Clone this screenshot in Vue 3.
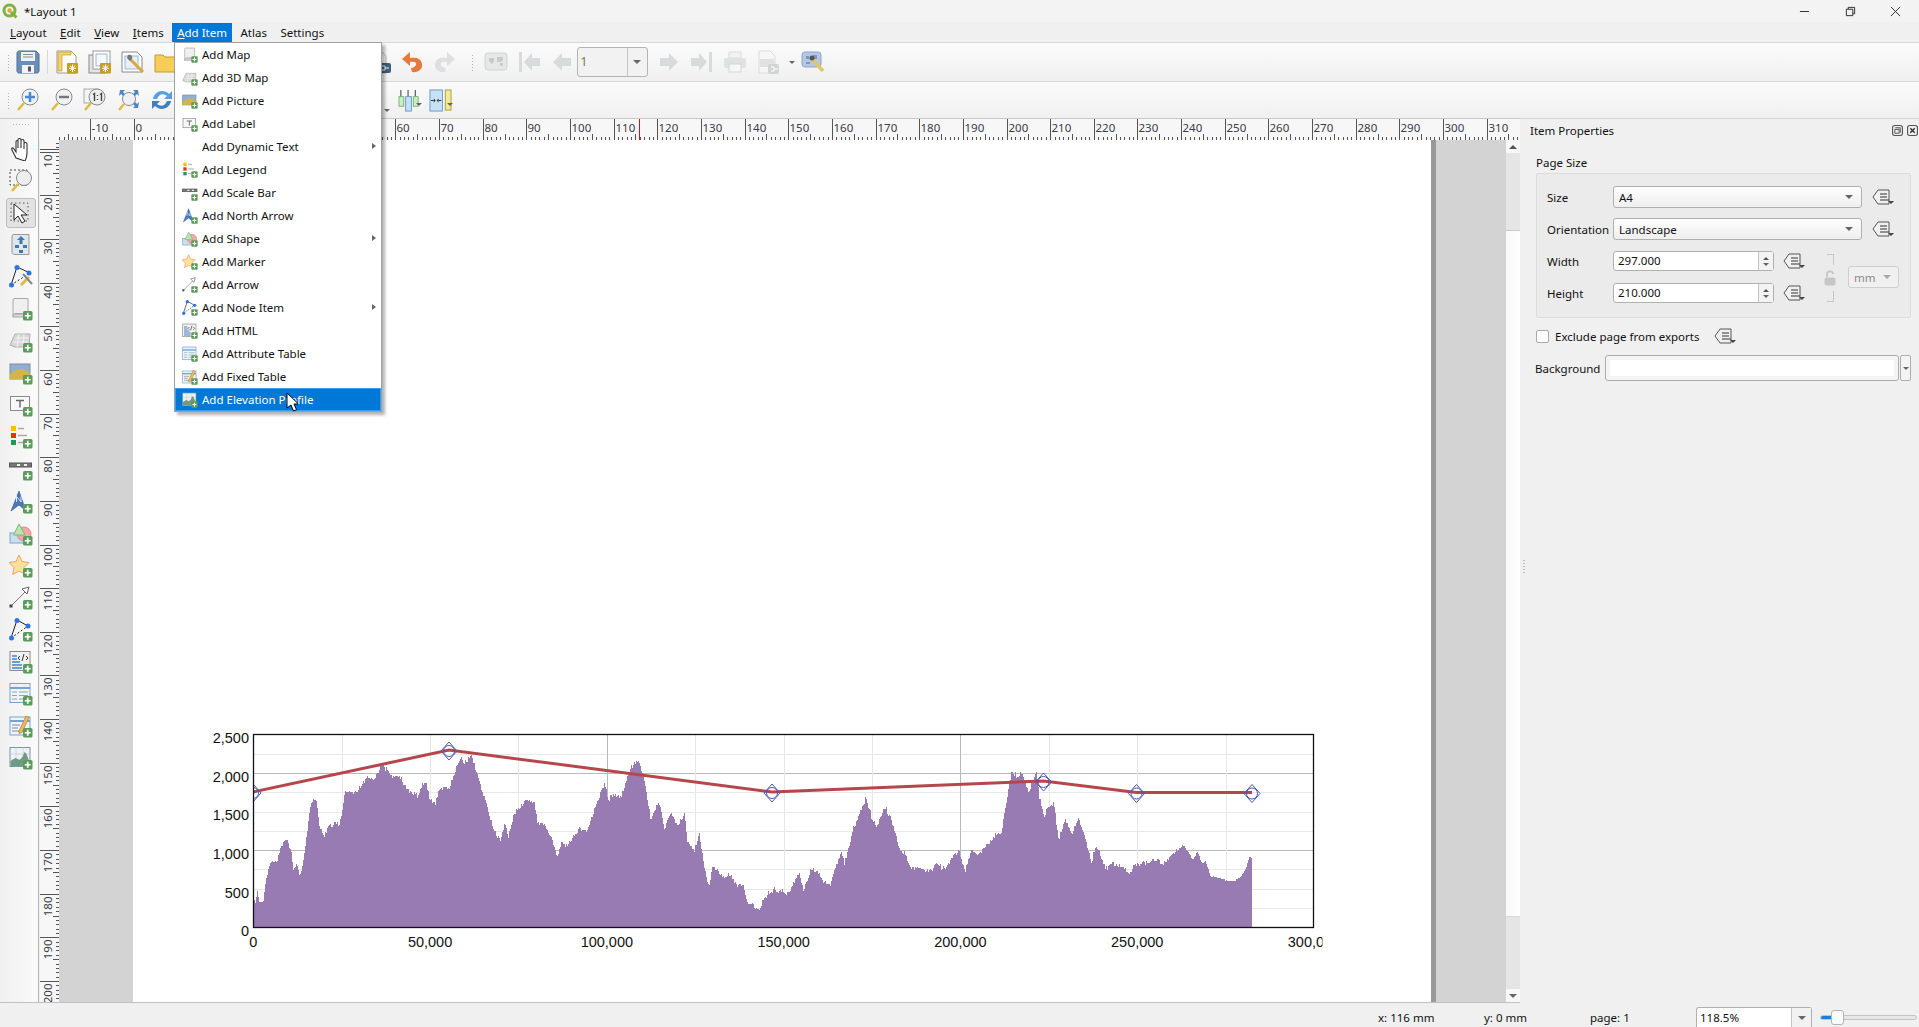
<template>
  <div class="app">
    <!-- shared icons -->
    <svg class="defs" aria-hidden="true">
      <defs>
        <g id="badge"><rect x="14" y="14" width="9.5" height="9.5" rx="1.5" fill="#5b9a5b" /><path d="M18.75 15.8v5.9M15.8 18.75h5.9" stroke="#fff" stroke-width="1.7" /></g>
        <symbol id="i-map" viewBox="0 0 24 24"><path d="M5 1.5h14v15H7c-2 0-3 1-3 3.5V4c0-1.4.4-2.5 1-2.5z" fill="#efefef" stroke="#a8a8a8" /><path d="M4 20c0-2 1-3 3-3h12v3z" fill="#d8d8d8" stroke="#a8a8a8" /><use href="#badge" /></symbol>
        <symbol id="i-map3d" viewBox="0 0 24 24"><path d="M1 16 6 5h15l-1 13H6z" fill="#d8d8d8" stroke="#b0b0b0" /><path d="M6 9h14M4 13h15M10 5 8 18M15 5l-1 13" stroke="#f4f4f4" /><use href="#badge" /></symbol>
        <symbol id="i-picture" viewBox="0 0 24 24"><rect x="1" y="3" width="20" height="15" fill="#8fb0d6" stroke="#8a8a8a" /><path d="M1 13c5-4 10-6 13-5l7 4v6H1z" fill="#d4b34a" /><use href="#badge" /></symbol>
        <symbol id="i-label" viewBox="0 0 24 24"><rect x="1.5" y="3.5" width="19" height="14" fill="#f8f8f8" stroke="#8a8a8a" /><path d="M7 7.5h8M11 7.5v7" stroke="#666" stroke-width="1.4" fill="none" /><use href="#badge" /></symbol>
        <symbol id="i-legend" viewBox="0 0 24 24"><rect x="2" y="1" width="5" height="5" fill="#f6c100" /><rect x="2" y="8" width="5" height="5" fill="#dd3a0a" /><rect x="2" y="15" width="5" height="5" fill="#1d9a4f" /><path d="M9 3.5h6M9 10.5h9M9 17.5h5" stroke="#aaa" stroke-width="1.5" /><use href="#badge" /></symbol>
        <symbol id="i-scale" viewBox="0 0 24 24"><rect x="0.5" y="6" width="22" height="4" fill="#777" stroke="#555" /><path d="M8 8h3M15 8h3" stroke="#eee" stroke-width="2" /><use href="#badge" /></symbol>
        <symbol id="i-north" viewBox="0 0 24 24"><path d="M2 21 10 1l7 20-7-6z" fill="#4a78b8" stroke="#35588c" stroke-width=".6" /><path d="M7.500 12V6.500L12 12V6.500" stroke="#dfe8f4" fill="none" /><use href="#badge" /></symbol>
        <symbol id="i-shape" viewBox="0 0 24 24"><rect x="1" y="11" width="16" height="10" fill="#c9dff2" stroke="#7fa3c8" /><circle cx="15" cy="12" r="7" fill="#f0a9a4" stroke="#d88" /><path d="M4.500 13 10 2l6 11z" fill="#bde4b3" stroke="#7db87a" /><use href="#badge" /></symbol>
        <symbol id="i-marker" viewBox="0 0 24 24"><path d="m10 1 3 6.500 7 1-5 5 1.300 7L10 17l-6.300 3.500L5 13.500 0 8.500l7-1z" fill="#fbe29c" stroke="#eba26a" /><use href="#badge" /></symbol>
        <symbol id="i-arrow" viewBox="0 0 24 24"><path d="M2 20 17 5" stroke="#777" /><path d="m20 1-7 2 5 5z" fill="#fff" stroke="#666" /><rect x="0.500" y="18.500" width="3" height="3" fill="#444" /><use href="#badge" /></symbol>
        <symbol id="i-node" viewBox="0 0 24 24"><path d="M2 20 8 2l11 6" stroke="#222" fill="none" /><path d="m2 20 17-12" stroke="#222" stroke-dasharray="2 2" /><circle cx="2.500" cy="20" r="2.500" fill="#2f74e0" /><circle cx="8" cy="2.500" r="2.500" fill="#2f74e0" /><circle cx="19" cy="8" r="2.500" fill="#2f74e0" /><use href="#badge" /></symbol>
        <symbol id="i-html" viewBox="0 0 24 24"><rect x="1" y="1.500" width="20" height="19" fill="#f1f1f1" stroke="#8a8a8a" /><path d="M3 6h5M3 9h5M3 12h8M3 15h10M3 18h10" stroke="#4a7fc0" stroke-width="1.500" /><path d="m11 6-2 2 2 2M17 6l2 2-2 2M15 4l-2 7" stroke="#333" fill="none" /><use href="#badge" /></symbol>
        <symbol id="i-attr" viewBox="0 0 24 24"><rect x="1" y="1.500" width="20" height="19" fill="#eef4fb" stroke="#7ba1cf" /><path d="M1 6h20" stroke="#7ba1cf" stroke-width="2" /><path d="M4 3.800h6M13 3.800h5" stroke="#dce8f6" /><path d="M3 10h5M10 10h9M3 13.500h5M10 13.500h9M3 17h5M10 17h5" stroke="#8aa" /><use href="#badge" /></symbol>
        <symbol id="i-fixed" viewBox="0 0 24 24"><rect x="1" y="3" width="20" height="18" fill="#eef4fb" stroke="#7ba1cf" /><path d="M1 7h20" stroke="#7ba1cf" stroke-width="2" /><path d="M3 11h8M3 14h6M3 17h8" stroke="#889" /><path d="m10 17 7-15 3 1.500-7 15-3 1z" fill="#f0b85a" stroke="#b07c2a" stroke-width=".7" /><use href="#badge" /></symbol>
        <symbol id="i-elev" viewBox="0 0 24 24"><rect x="1" y="1.500" width="20" height="19" fill="#eef2f4" stroke="#7c93a3" /><path d="M7 1.500v19M14 1.500v19M1 8h20M1 14h20" stroke="#c6d0d6" stroke-width=".8" /><path d="M1.500 20v-5l5-3 4 2 3-3 2-5 2 2 3 8v4z" fill="#6f9a83" /><use href="#badge" /></symbol>
        <symbol id="i-save" viewBox="0 0 24 24"><path d="M3 1h17l3 3v17c0 1-1 2-2 2H3c-1 0-2-1-2-2V3c0-1 1-2 2-2z" fill="#6a8eb8" stroke="#4f6f96" /><rect x="5" y="2" width="14" height="9" fill="#eef1f5" /><path d="M7 4.500h10M7 7h10" stroke="#8a8a8a" /><rect x="6" y="15" width="12" height="8" fill="#f2f2f2" /><rect x="12" y="16.500" width="3" height="5" fill="#556" /></symbol>
        <symbol id="i-newl" viewBox="0 0 24 24"><path d="M2 1h14l5 5v17H2z" fill="#fff" stroke="#999" /><path d="M3 2h13v3H7v16H3z" fill="#f3d36d" stroke="#c49a2a" stroke-width=".7" /><rect x="12" y="13" width="11" height="10.500" rx="1" fill="#c69d1c" /><path d="M17.500 14.500v7.500M14 18.200h7M15 15.500l5 5.500M20 15.500l-5 5.500" stroke="#fff" stroke-width="1" /></symbol>
        <symbol id="i-dup" viewBox="0 0 24 24"><rect x="1" y="5" width="16" height="18" fill="#e3e3e3" stroke="#888" /><rect x="5" y="1" width="17" height="18" fill="#fff" stroke="#999" /><rect x="8" y="4" width="11" height="12" fill="#f5f8fc" stroke="#9db7d6" /><rect x="12" y="13" width="11" height="10.500" rx="1" fill="#c69d1c" /><path d="M17.500 14.500v7.500M14 18.200h7M15 15.500l5 5.500M20 15.500l-5 5.500" stroke="#fff" /></symbol>
        <symbol id="i-manager" viewBox="0 0 24 24"><path d="M1 2h15l5 5v15H1z" fill="#fff" stroke="#888" /><rect x="4" y="6" width="13" height="13" fill="#e7eef7" stroke="#9db7d6" /><path d="m8 8 14 14" stroke="#d4aa3e" stroke-width="3" /><path d="M7 5c3-1 5 1 4 4L9 11 6 8z" fill="#777" /></symbol>
        <symbol id="i-open" viewBox="0 0 24 24"><path d="M1 5h8l2 2h12v15H1z" fill="#f5cd58" stroke="#c99c22" /></symbol>
        <symbol id="i-undo" viewBox="0 0 24 24"><path d="M10 2 2 9l8 7v-4c4-1 7 0 6 3-1 2-3 3-5 3l1 4c6 1 11-3 10-8-1-6-6-7-12-6z" fill="#e5793a" /></symbol>
        <symbol id="i-redo" viewBox="0 0 24 24"><path d="m14 2 8 7-8 7v-4c-4-1-7 0-6 3 1 2 3 3 5 3l-1 4C6 23 1 19 2 14c1-6 6-7 12-6z" fill="#dde0e0" /></symbol>
        <symbol id="i-atlas" viewBox="0 0 24 24"><rect x="1" y="3" width="22" height="17" rx="3" fill="#e6e8e8" stroke="#d0d3d3" /><path d="M5 8h5v3l-2 3-3-3zM13 7h6v3l-2 2h-4zM16 13h3v3h-3z" fill="#c6caca" /></symbol>
        <symbol id="i-first" viewBox="0 0 24 24"><path d="M2 2h3v20H2zM7 12l8-9v5h8v8h-8v5z" fill="#d8dbdc" /></symbol>
        <symbol id="i-prev" viewBox="0 0 24 24"><path d="m3 12 9-9v5h9v8h-9v5z" fill="#d8dbdc" /></symbol>
        <symbol id="i-next" viewBox="0 0 24 24"><path d="m21 12-9-9v5H3v8h9v5z" fill="#d8dbdc" /></symbol>
        <symbol id="i-last" viewBox="0 0 24 24"><path d="M22 2h-3v20h3zM17 12 9 3v5H1v8h8v5z" fill="#d8dbdc" /></symbol>
        <symbol id="i-print" viewBox="0 0 24 24"><path d="M6 2h12v6H6z" fill="#f2f2f2" stroke="#d8dbdc" /><rect x="1" y="8" width="22" height="10" rx="2" fill="#dfe2e2" /><rect x="6" y="14" width="12" height="8" fill="#f7f7f7" stroke="#d3d6d6" /></symbol>
        <symbol id="i-export" viewBox="0 0 24 24"><path d="M3 1h11l5 5v17H3z" fill="#f6f6f6" stroke="#dcdcdc" /><rect x="4" y="9" width="14" height="8" fill="#e0e2e2" /><rect x="12" y="14" width="11" height="10" rx="2" fill="#d2d4d4" /><path d="M15 17h3v4h-3M18 19h4" stroke="#fff" fill="none" /></symbol>
        <symbol id="i-export-on" viewBox="0 0 24 24"><path d="M3 1h11l5 5v17H3z" fill="#f6f6f6" stroke="#bbb" /><rect x="12" y="13" width="12" height="10" rx="2" fill="#3e5f78" /><path d="M15 16h3v4h-3M18 18h4" stroke="#fff" fill="none" /></symbol>
        <symbol id="i-atset" viewBox="0 0 24 24"><rect x="1" y="2" width="19" height="15" rx="3" fill="#b4c8e4" stroke="#8ea6c8" /><path d="M5 6h3v3H5zM12 5h4v4h-4zM5 12h4v2H5z" fill="#7d97bd" /><path d="m11 9 11 12" stroke="#e0c766" stroke-width="3.500" /><circle cx="11" cy="8" r="2.500" fill="#555" /></symbol>
        <symbol id="i-zin" viewBox="0 0 24 24"><circle cx="14" cy="9" r="8" fill="#eef2f7" stroke="#8a8a8a" /><path d="M14 4v10M9 9h10" stroke="#4c86cc" stroke-width="2.500" /><path d="m8 15-6 7" stroke="#e2b93f" stroke-width="2.500" /></symbol>
        <symbol id="i-zout" viewBox="0 0 24 24"><circle cx="14" cy="9" r="8" fill="#eef2f7" stroke="#8a8a8a" /><path d="M9 9h10" stroke="#777" stroke-width="2.500" /><path d="m8 15-6 7" stroke="#e2b93f" stroke-width="2.500" /></symbol>
        <symbol id="i-z11" viewBox="0 0 24 24"><rect x="1" y="1" width="14" height="14" fill="#f4f4f4" stroke="#aaa" /><circle cx="14" cy="9" r="8" fill="#eee" stroke="#8a8a8a" /><path d="M10 6.500 11.500 5.500V13M17 6.500 18.500 5.500V13M14.500 7v1M14.500 11v1" stroke="#444" stroke-width="1.400" fill="none" /><path d="m8 15-6 7" stroke="#e2b93f" stroke-width="2.500" /></symbol>
        <symbol id="i-zfull" viewBox="0 0 24 24"><path d="M3 2h5L6 4l3 3-2 2-3-3-2 2zM21 2h-5l2 2-3 3 2 2 3-3 2 2zM21 20h-5l2-2-3-3 2-2 3 3 2-2z" fill="#4a85c8" /><circle cx="12" cy="11" r="6.500" fill="#eef2f7" stroke="#8a8a8a" /><path d="m7 16-5 6" stroke="#e2b93f" stroke-width="2.500" /></symbol>
        <symbol id="i-refresh" viewBox="0 0 24 24"><path d="M3 11C4 4 13 0 19 6l3-3v8h-8l3-3c-4-3-8-2-10 3z" fill="#58a0dc" /><path d="M21 13c-1 7-10 11-16 5l-3 3v-8h8l-3 3c4 3 8 2 10-3z" fill="#3d80c2" /></symbol>
        <symbol id="i-hand" viewBox="0 0 24 24"><path d="M7 21 3 13c-1-2 1-3 2-1l2 3V5c0-2 2-2 2 0v6-8c0-2 3-2 3 0v8-7c0-2 3-2 3 0v8-5c0-2 3-2 3 0v9c0 4-1 6-2 8z" fill="#fff" stroke="#333" stroke-width="1.100" /></symbol>
        <symbol id="i-zbox" viewBox="0 0 24 24"><rect x="1" y="1" width="17" height="15" fill="none" stroke="#444" stroke-dasharray="2 2" /><circle cx="15" cy="9" r="7.500" fill="#eee" stroke="#888" /><path d="m9 15-6 7" stroke="#e2b93f" stroke-width="2.500" /></symbol>
        <symbol id="i-select" viewBox="0 0 24 24"><rect x="2" y="2" width="17" height="18" fill="none" stroke="#555" stroke-dasharray="1.500 2.500" /><path d="M5 3v16l4-4 4 7 3-2-4-6h6z" fill="#fff" stroke="#222" /></symbol>
        <symbol id="i-move" viewBox="0 0 24 24"><path d="M4 1.500h16v20H6c-2 0-3-1-3-2V3z" fill="#dfe6ee" stroke="#999" /><path d="m12 3 4 4h-8zM10.500 7h3v4h-3zM6 12h4v3H6zM14 12h4v3h-4zM10 17h4v3h-4z" fill="#3d77b5" /></symbol>
        <symbol id="i-edit" viewBox="0 0 24 24"><path d="M2 20 8 2l13 6" stroke="#222" fill="none" /><path d="m2 20 19-12" stroke="#222" stroke-dasharray="2 2" /><circle cx="2.500" cy="20" r="2.500" fill="#2f74e0" /><circle cx="8" cy="2.500" r="2.500" fill="#2f74e0" /><circle cx="20" cy="8" r="2.500" fill="#2f74e0" /><path d="m12 20 8-8" stroke="#e2b93f" stroke-width="3" /><path d="m14 9 9 10" stroke="#888" stroke-width="2" /></symbol>
        <symbol id="i-dist" viewBox="0 0 24 24"><path d="M3 1v7M10.500 1v7M18 1v7" stroke="#333" /><rect x="1" y="8" width="5" height="10" fill="#c6f0c0" stroke="#7faf7a" /><rect x="8" y="8" width="6" height="15" fill="#c5e2f7" stroke="#6a9ac2" /><rect x="16" y="8" width="5" height="10" fill="#c6f0c0" stroke="#7faf7a" /></symbol>
        <symbol id="i-resize" viewBox="0 0 24 24"><rect x="1" y="1" width="13" height="22" fill="#c5e2f7" stroke="#6a9ac2" /><path d="M2 12h3M13 12h-3" stroke="#333" /><path d="m5 10 2 2-2 2zM10 10l-2 2 2 2z" fill="#333" /><rect x="17" y="1" width="6" height="21" fill="#f5e98f" stroke="#a89c50" /></symbol>
        <symbol id="i-dd" viewBox="0 0 23 16"><path d="M6 1h11v14H6L1 8z" fill="#f0f0f0" stroke="#555" /><path d="M8 5h7M8 8h7M8 11h9" stroke="#333" /><path d="M16 12h6l-3 3z" fill="#444" /></symbol>
      </defs>
    </svg>

    <header class="titlebar">
      <svg class="logo" viewBox="0 0 16 16">
        <circle cx="7.500" cy="7.500" r="5.500" fill="none" stroke="#7fb241" stroke-width="3" />
        <circle cx="7.500" cy="7.500" r="2.200" fill="#e9a53a" />
        <path d="m9 9 5.500 5.500" stroke="#7fb241" stroke-width="3" />
      </svg>
      <span class="title">*Layout 1</span>
      <div class="win-btns">
        <svg viewBox="0 0 12 12"><path d="M1 6h10" stroke="#222" /></svg>
        <svg viewBox="0 0 12 12"><path d="M1.500 3.500h7v7h-7zM3.500 3.500v-2h7v7h-2" fill="none" stroke="#222" /></svg>
        <svg viewBox="0 0 12 12"><path d="m1 1 10 10M11 1 1 11" stroke="#222" /></svg>
      </div>
    </header>

    <nav class="menubar">
      <span v-for="m in menus" :key="m.label" class="menu-title" :class="{ open: m.open }"><u v-if="m.key">{{ m.label[0] }}</u>{{ m.key ? m.label.slice(1) : m.label }}</span>
    </nav>

    <div class="toolbar row1">
      <span class="grip"></span>
      <span class="tb"><svg><use href="#i-save" /></svg></span>
      <span class="tb-sep"></span>
      <span v-for="id in fileIcons" :key="id" class="tb"><svg><use :href="'#' + id" /></svg></span>
      <span class="under-menu-1"></span>
      <span class="tb"><svg><use href="#i-export-on" /></svg></span>
      <span class="tb"><svg><use href="#i-undo" /></svg></span>
      <span class="tb"><svg><use href="#i-redo" /></svg></span>
      <span class="grip grip-mid"></span>
      <span class="tb"><svg><use href="#i-atlas" /></svg></span>
      <span class="tb"><svg><use href="#i-first" /></svg></span>
      <span class="tb"><svg><use href="#i-prev" /></svg></span>
      <span class="atlas-combo"><span class="value">1</span><span class="drop"><i class="tri"></i></span></span>
      <span class="tb"><svg><use href="#i-next" /></svg></span>
      <span class="tb"><svg><use href="#i-last" /></svg></span>
      <span class="tb"><svg><use href="#i-print" /></svg></span>
      <span class="tb tb-wide"><svg><use href="#i-export" /></svg><i class="tri small"></i></span>
      <span class="tb"><svg><use href="#i-atset" /></svg></span>
    </div>

    <div class="toolbar row2">
      <span class="grip"></span>
      <span v-for="id in zoomIcons" :key="id" class="tb"><svg><use :href="'#' + id" /></svg></span>
      <span class="under-menu-2"></span>
      <i class="tri small"></i>
      <span class="tb-align"><svg><use href="#i-dist" /></svg><i class="tri small"></i></span>
      <span class="tb-align resize"><svg><use href="#i-resize" /></svg><i class="tri small"></i></span>
    </div>

    <div class="workspace">
      <aside class="toolbox">
        <span class="grip-h"></span>
        <span v-for="t in toolIcons" :key="t.id" class="tool" :class="{ active: t.active }"><svg><use :href="'#' + t.id" /></svg></span>
      </aside>

      <main class="view">
        <div class="ruler-top">
          <div class="ruler-corner"></div>
          <svg class="h-ruler" width="1461" height="21" viewBox="59 0 1461 21" shape-rendering="crispEdges">
            <path :d="hTicks" stroke="#555" fill="none" />
            <path d="M639.500 0v21" stroke="#e01010" />
            <text v-for="l in hLabels" :key="l.text" :x="l.x + 1" y="13" class="ruler-text">{{ l.text }}</text>
          </svg>
        </div>
        <div class="view-body">
          <svg class="v-ruler" width="19" height="863" viewBox="0 140 19 863" shape-rendering="crispEdges">
            <path :d="vTicks" stroke="#555" fill="none" />
            <path d="M0 149.500h19" stroke="#e01010" />
            <text v-for="l in vLabels" :key="l.text" class="ruler-text" text-anchor="end" :transform="`translate(12 ${l.y + 2}) rotate(-90)`">{{ l.text }}</text>
          </svg>
          <div class="canvas">
            <!-- layout page; item sits at its place on the sheet -->
            <svg class="sheet" width="1447" height="863" viewBox="59 140 1447 863">
              <rect x="133" y="140" width="1298" height="863" fill="#fff" />
              <rect x="1431" y="140" width="5" height="863" fill="#999" />
              <defs>
                <clipPath id="plot-clip"><rect x="253" y="734" width="1061" height="194" /></clipPath>
                <clipPath id="item-clip"><rect x="200" y="720" width="1122.500" height="240" /></clipPath>
              </defs>
              <g shape-rendering="crispEdges">
                <path v-for="g in grid" :key="g.d" :d="g.d" :stroke="g.major ? '#b9b9b9' : '#e8e8e8'" fill="none" />
                <path :d="profilePath" fill="#997bb3" />
              </g>
              <g clip-path="url(#plot-clip)">
                <polyline :points="linePoints" fill="none" stroke="#b5474c" stroke-width="3" />
                <g v-for="n in nodes" :key="n[0]" fill="none" stroke="#4b58b4" stroke-width="1">
                  <path :d="`M${n[0]} ${n[1] - 8}l8 9-8 9-8-9z`" />
                  <circle :cx="n[0]" :cy="n[1] + 1" r="5.500" />
                </g>
              </g>
              <rect x="253.500" y="734.500" width="1060" height="193" fill="none" stroke="#111" stroke-width="1.300" />
              <g clip-path="url(#item-clip)" class="chart-text">
                <text v-for="y in yAxis" :key="y.text" x="249" :y="y.y" text-anchor="end">{{ y.text }}</text>
                <text v-for="x in xAxis" :key="x.text" :x="x.x" y="946.500" text-anchor="middle">{{ x.text }}</text>
              </g>
            </svg>
          </div>
          <div class="vscroll">
            <span class="sb-btn"><i class="tri up"></i></span>
            <span class="sb-groove top"></span>
            <span class="sb-handle"></span>
            <span class="sb-groove bottom"></span>
            <span class="sb-btn"><i class="tri"></i></span>
          </div>
        </div>
      </main>

      <aside class="panel">
        <div class="panel-head">
          <span>Item Properties</span>
          <span class="dock-btns">
            <svg viewBox="0 0 10 10"><rect x=".5" y=".5" width="9" height="9" rx="2" fill="#eee" stroke="#555" /><path d="M3 2.500h4.500V7M2.500 4h4v3.500h-4z" fill="none" stroke="#444" stroke-width=".8" /></svg>
            <svg viewBox="0 0 10 10"><rect x=".5" y=".5" width="9" height="9" rx="2" fill="#eee" stroke="#555" /><path d="m3 3 4 4M7 3 3 7" stroke="#333" stroke-width="1.300" /></svg>
          </span>
        </div>
        <div class="panel-body">
          <div class="group-title">Page Size</div>
          <section class="group">
            <div class="form-row">
              <label>Size</label>
              <span class="combo"><span>A4</span><i class="tri"></i></span>
              <svg class="dd"><use href="#i-dd" /></svg>
            </div>
            <div class="form-row">
              <label>Orientation</label>
              <span class="combo"><span>Landscape</span><i class="tri"></i></span>
              <svg class="dd"><use href="#i-dd" /></svg>
            </div>
            <div class="size-block">
              <div class="size-fields">
                <div class="form-row" v-for="s in sizes" :key="s.label">
                  <label>{{ s.label }}</label>
                  <span class="spin"><span class="spin-val">{{ s.value }}</span><span class="spin-btns"><i class="tri up small"></i><i class="tri small"></i></span></span>
                  <svg class="dd spin-dd"><use href="#i-dd" /></svg>
                </div>
              </div>
              <div class="lock">
                <span class="bracket b-top"></span>
                <svg class="padlock" viewBox="0 0 12 16"><path d="M3 7V4c0-3.500 6-3.500 6 0" fill="none" stroke="#c6c6c6" stroke-width="1.800" /><rect x="0.500" y="7.500" width="11" height="8" rx="2" fill="#c6c6c6" /></svg>
                <span class="bracket b-bottom"></span>
              </div>
              <span class="unit"><span>mm</span><i class="tri"></i></span>
            </div>
          </section>
          <div class="exclude">
            <span class="check"></span>
            <span>Exclude page from exports</span>
            <svg class="dd"><use href="#i-dd" /></svg>
          </div>
          <div class="background">
            <label>Background</label>
            <span class="color-btn"><span></span></span>
            <span class="color-drop"><i class="tri small"></i></span>
          </div>
        </div>
        <span class="splitter"></span>
      </aside>
    </div>

    <footer class="statusbar">
      <span class="st st-x">x: 116 mm</span>
      <span class="st st-y">y: 0 mm</span>
      <span class="st st-page">page: 1</span>
      <span class="zoom-combo"><span>118.5%</span><span class="drop"><i class="tri"></i></span></span>
      <span class="slider"><span class="fill"></span><span class="knob"></span></span>
    </footer>

    <!-- open Add Item menu -->
    <div class="popup">
      <div v-for="item in addItems" :key="item.label" class="popup-item" :class="{ hot: item.hot }">
        <svg v-if="item.icon" class="popup-icon"><use :href="'#' + item.icon" /></svg>
        <span v-else class="popup-icon"></span>
        <span>{{ item.label }}</span>
        <i v-if="item.sub" class="sub-arrow"></i>
      </div>
    </div>
    <svg class="cursor" viewBox="0 0 12 20"><path d="M1 1v15l4-3 2.500 6 3-1.300L8 12h4.500z" fill="#fff" stroke="#000" /></svg>
  </div>
</template>

<script setup>
const menus = [
  { label: 'Layout', key: true },
  { label: 'Edit', key: true },
  { label: 'View', key: true },
  { label: 'Items', key: true },
  { label: 'Add Item', key: true, open: true },
  { label: 'Atlas' },
  { label: 'Settings' },
]

const fileIcons = ['i-newl', 'i-dup', 'i-manager', 'i-open']
const zoomIcons = ['i-zin', 'i-zout', 'i-z11', 'i-zfull', 'i-refresh']

const toolIcons = [
  { id: 'i-hand' }, { id: 'i-zbox' }, { id: 'i-select', active: true }, { id: 'i-move' }, { id: 'i-edit' },
  { id: 'i-map' }, { id: 'i-map3d' }, { id: 'i-picture' }, { id: 'i-label' }, { id: 'i-legend' },
  { id: 'i-scale' }, { id: 'i-north' }, { id: 'i-shape' }, { id: 'i-marker' }, { id: 'i-arrow' },
  { id: 'i-node' }, { id: 'i-html' }, { id: 'i-attr' }, { id: 'i-fixed' }, { id: 'i-elev' },
]

const addItems = [
  { label: 'Add Map', icon: 'i-map' },
  { label: 'Add 3D Map', icon: 'i-map3d' },
  { label: 'Add Picture', icon: 'i-picture' },
  { label: 'Add Label', icon: 'i-label' },
  { label: 'Add Dynamic Text', sub: true },
  { label: 'Add Legend', icon: 'i-legend' },
  { label: 'Add Scale Bar', icon: 'i-scale' },
  { label: 'Add North Arrow', icon: 'i-north' },
  { label: 'Add Shape', icon: 'i-shape', sub: true },
  { label: 'Add Marker', icon: 'i-marker' },
  { label: 'Add Arrow', icon: 'i-arrow' },
  { label: 'Add Node Item', icon: 'i-node', sub: true },
  { label: 'Add HTML', icon: 'i-html' },
  { label: 'Add Attribute Table', icon: 'i-attr' },
  { label: 'Add Fixed Table', icon: 'i-fixed' },
  { label: 'Add Elevation Profile', icon: 'i-elev', hot: true },
]

const sizes = [
  { label: 'Width', value: '297.000' },
  { label: 'Height', value: '210.000' },
]

// rulers: 4.365 px per mm
const MM = 4.365
const X0 = 133.5
const Y0 = 108

function tickLen(mm) {
  if (mm % 10 === 0) return 21
  return mm % 5 === 0 ? 6 : 3
}

let h = ''
const hLabels = []
for (let mm = -17; mm <= 317; mm++) {
  const x = Math.round(X0 + mm * MM) + 0.5
  const len = tickLen(mm)
  h += `M${x} ${21 - len}v${len}`
  // labels from 10 to 50 are behind the open menu
  if (mm % 10 === 0 && (x < 170 || x > 385)) hLabels.push({ text: String(mm), x })
}
const hTicks = h

let v = ''
const vLabels = []
for (let mm = 8; mm <= 205; mm++) {
  const y = Math.round(Y0 + mm * MM) + 0.5
  const len = mm % 10 === 0 ? 19 : tickLen(mm)
  v += `M${19 - len} ${y}h${len}`
  if (mm % 10 === 0) vLabels.push({ text: String(mm), y })
}
const vTicks = v

// chart: plot is 253.3..1314 x 734.5..927.3
const PL = 253.3
const PB = 927.3
const PW = 1060.7
const PH = 192.8

const grid = []
for (let e = 250; e < 2500; e += 250) {
  const y = Math.round(PB - (e / 2500) * PH) + 0.5
  grid.push({ d: `M${PL} ${y}H${PL + PW}`, major: e % 1000 === 0 })
}
for (let d = 25000; d < 300000; d += 25000) {
  const x = Math.round(PL + (d / 300000) * PW) + 0.5
  grid.push({ d: `M${x} 734V927`, major: d % 100000 === 0 })
}

const yAxis = [2500, 2000, 1500, 1000, 500, 0].map((e) => ({
  text: e.toLocaleString('en-US'),
  y: PB - (e / 2500) * PH + 8.8,
}))
const xAxis = [0, 50000, 100000, 150000, 200000, 250000, 300000].map((d) => ({
  text: d.toLocaleString('en-US'),
  x: PL + (d / 300000) * PW,
}))

// profile outline traced off the plot, [x px from plot left, height px]
const left = [
  [160, 540], [165, 550], [170, 520], [183, 555], [195, 460], [205, 425], [220, 425], [228, 385], [242, 352], [255, 390],
  [262, 450], [270, 430], [278, 468], [285, 430], [295, 350], [305, 250], [320, 240], [325, 310], [340, 352], [348, 315],
  [362, 320], [368, 305], [378, 315], [392, 215], [425, 210], [450, 168], [465, 182], [488, 128], [510, 170], [525, 165],
  [550, 210], [575, 225], [597, 185], [605, 240], [620, 250], [630, 205], [655, 205], [665, 170], [685, 105], [695, 130],
  [712, 105], [730, 180], [745, 235], [760, 300], [775, 345], [785, 365], [795, 310], [805, 350], [820, 280], [850, 240],
  [870, 245], [878, 305], [900, 320], [915, 360], [928, 410], [940, 362], [950, 380], [985, 325], [1005, 330], [1025, 260],
  [1048, 188], [1055, 235], [1070, 225], [1090, 230], [1115, 140], [1132, 122], [1145, 160], [1160, 260], [1165, 300], [1185, 240],
  [1200, 330], [1215, 280], [1235, 320], [1250, 280], [1258, 370], [1275, 390], [1288, 345], [1300, 440], [1312, 505], [1322, 435],
  [1345, 465], [1365, 465], [1385, 500], [1398, 495], [1408, 545], [1440, 568], [1450, 535], [1475, 512], [1515, 515], [1540, 458],
  [1550, 505],
].map(([zx, zy]) => [(zx - 160) / 2.529, (622 - zy) / 3])
const right = [
  [0, 492], [10, 510], [30, 450], [48, 450], [65, 485], [85, 497], [100, 440], [115, 397], [125, 425], [145, 345],
  [170, 270], [185, 238], [200, 295], [215, 318], [238, 260], [255, 300], [270, 350], [280, 395], [295, 398], [305, 440],
  [340, 450], [370, 452], [380, 432], [410, 445], [430, 405], [445, 395], [462, 450], [480, 390], [500, 408], [520, 380],
  [545, 350], [565, 335], [578, 240], [592, 155], [605, 170], [620, 160], [640, 215], [662, 155], [670, 230], [685, 300],
  [690, 265], [710, 250], [725, 355], [742, 295], [760, 340], [780, 298], [795, 340], [815, 425], [830, 378], [855, 445],
  [875, 430], [900, 440], [925, 460], [932, 435], [960, 430], [1000, 418], [1015, 437], [1040, 405], [1072, 372], [1100, 420],
  [1112, 395], [1125, 430], [1135, 425], [1150, 468], [1190, 480], [1210, 485], [1235, 470], [1250, 440], [1258, 408], [1266, 415],
].map(([zx, zy]) => [546.7 + zx / 2.8, (622 - zy) / 3])
const outline = left.concat(right)

let seed = 7
function noise() {
  seed = (seed * 1103515245 + 12345) % 2147483648
  return seed / 2147483648 - 0.5
}

function buildProfile() {
  let d = `M${Math.round(PL)} ${PB}`
  let seg = 0
  const end = outline[outline.length - 1][0]
  for (let x = 0; x < end; x++) {
    while (seg < outline.length - 2 && outline[seg + 1][0] <= x) seg++
    const [x1, h1] = outline[seg]
    const [x2, h2] = outline[seg + 1]
    const base = h1 + ((h2 - h1) * (x - x1)) / (x2 - x1)
    // last stretch of the track is smooth, the rest is jagged
    const jag = x > 930 ? 1.5 : noise() > 0.38 ? 9 : 4
    const top = Math.max(0, base + noise() * jag)
    d += `V${(PB - top).toFixed(1)}h1`
  }
  return d + `V${PB}z`
}
const profilePath = buildProfile()

const nodes = [
  [253, 792], [449, 750], [772, 792], [1043.5, 781], [1136.5, 792.5], [1252, 792.5],
]
const linePoints = nodes.map((n) => n.join(',')).join(' ')
</script>

<style scoped>
.app {
  position: relative;
  width: 1919px;
  height: 1027px;
  display: flex;
  flex-direction: column;
  overflow: hidden;
  background: #f0f0f0;
  font-family: "Noto Sans", "Open Sans", sans-serif;
  font-size: 11.5px;
  color: #111;
}
.defs {
  position: absolute;
  width: 0;
  height: 0;
}

.titlebar {
  height: 22px;
  flex: none;
  display: flex;
  align-items: center;
  background: #f3f3f3;
  padding-left: 2px;
}
.logo {
  width: 16px;
  height: 16px;
}
.title {
  margin-left: 6px;
  font-size: 11.5px;
}
.win-btns {
  margin-left: auto;
  display: flex;
  gap: 34.500px;
  padding-right: 18px;
}
.win-btns svg {
  width: 11px;
  height: 11px;
}

.menubar {
  height: 20px;
  flex: none;
  display: flex;
  padding-left: 5px;
  background: #f0f0f0;
}
.menu-title {
  padding: 0 5px;
  height: 20px;
  margin-top: 1px;
  line-height: 20px;
  white-space: nowrap;
  margin-right: 3.500px;
}
.menu-title.open {
  background: #0078d7;
  color: #fff;
}

.toolbar {
  height: 38px;
  flex: none;
  display: flex;
  align-items: center;
  box-sizing: border-box;
  border-top: 1px solid #d8d8d8;
  background: linear-gradient(#fbfbfb, #f0f0f0);
  padding-left: 7px;
}
.row1 {
  height: 39px;
}
.row2 {
  border-bottom: 1px solid #c8c8c8;
}
.grip {
  width: 3px;
  height: 17px;
  flex: none;
  margin-right: 1.500px;
  background-image: radial-gradient(circle, #b4b4b4 0.7px, transparent 0.8px);
  background-size: 3px 3px;
}
.grip-mid {
  margin: 0 6px 0 9px;
}
.tb {
  width: 33px;
  height: 26px;
  flex: none;
  display: flex;
  align-items: center;
  justify-content: center;
}
.tb svg {
  width: 24px;
  height: 24px;
}
.row2 .tb {
  width: 33.500px;
}
.tb-wide {
  width: 45px;
  justify-content: flex-start;
  padding-left: 4px;
  box-sizing: border-box;
  gap: 9px;
}
.tb-sep {
  width: 1px;
  height: 24px;
  background: #d8d8d8;
  margin: 0 3px 0 2px;
  flex: none;
}
.under-menu-1 {
  width: 180px;
  flex: none;
}
.under-menu-2 {
  width: 205px;
  flex: none;
}
.tri {
  display: inline-block;
  width: 0;
  height: 0;
  border-left: 4px solid transparent;
  border-right: 4px solid transparent;
  border-top: 4px solid #666;
}
.tri.up {
  border-top: 0;
  border-bottom: 4px solid #555;
}
.tri.small {
  border-left-width: 3px;
  border-right-width: 3px;
  border-top-width: 3px;
}
.tri.small.up {
  border-bottom-width: 3px;
  border-top-width: 0;
}
.atlas-combo {
  width: 71px;
  height: 30px;
  flex: none;
  display: flex;
  box-sizing: border-box;
  margin: 0 5px 0 -2px;
  border: 1px solid #b4b4b4;
  border-radius: 3px;
  background: #f2f2f2;
}
.atlas-combo .value {
  flex: 1;
  padding-left: 3px;
  line-height: 28px;
  color: #8a7348;
  font-size: 12px;
}
.atlas-combo .drop {
  width: 19px;
  border-left: 1px solid #c4c4c4;
  display: flex;
  align-items: center;
  justify-content: center;
}
.row2 .tri.small {
  align-self: flex-end;
  margin-bottom: 6px;
}
.tb-align {
  display: flex;
  margin-left: 8px;
  flex: none;
  position: relative;
}
.tb-align svg {
  width: 23px;
  height: 23px;
}
.tb-align .tri {
  margin-left: -5px;
}
.tb-align.resize {
  margin-left: 7px;
}

.workspace {
  flex: 1;
  min-height: 0;
  display: flex;
}
.toolbox {
  width: 39px;
  flex: none;
  box-sizing: border-box;
  border-right: 1px solid #b4b4b4;
  border-bottom: 1px solid #c0c0c0;
  display: flex;
  flex-direction: column;
  align-items: center;
  padding: 4px 0 0 3px;
  background: linear-gradient(90deg, #f0f0f0, #fafafa);
}
.grip-h {
  width: 17px;
  height: 4px;
  margin: 0 0 7px;
  background-image: radial-gradient(circle, #b4b4b4 0.7px, transparent 0.8px);
  background-size: 3px 3px;
}
.tool {
  width: 30px;
  height: 30px;
  flex: none;
  margin-bottom: 2.050px;
  display: flex;
  align-items: center;
  justify-content: center;
  box-sizing: border-box;
  border-radius: 3px;
}
.tool svg {
  width: 24px;
  height: 24px;
}
.tool.active {
  background: #e2e2e2;
  border: 1px solid #bdbdbd;
}

.view {
  width: 1481px;
  flex: none;
  display: flex;
  flex-direction: column;
  box-sizing: border-box;
  border-bottom: 1px solid #c0c0c0;
}
.ruler-top {
  display: flex;
  height: 21px;
  flex: none;
  background: #f7f7f7;
}
.ruler-corner {
  width: 20px;
  flex: none;
}
.ruler-text {
  font-family: "Noto Sans", sans-serif;
  font-size: 11.5px;
  fill: #3a3a4a;
  shape-rendering: auto;
}
.view-body {
  flex: 1;
  min-height: 0;
  display: flex;
  overflow: hidden;
}
.v-ruler {
  flex: none;
  background: #f7f7f7;
  margin-left: 1px;
}
.canvas {
  width: 1447px;
  flex: none;
  background: #d3d3d3;
  overflow: hidden;
}
.sheet {
  display: block;
}
.chart-text text {
  font-family: "Liberation Sans", Arial, sans-serif;
  font-size: 14.5px;
  fill: #111;
}
.vscroll {
  width: 14px;
  flex: none;
  display: flex;
  flex-direction: column;
  background: #f4f4f4;
}
.sb-btn {
  height: 13px;
  flex: none;
  display: flex;
  align-items: center;
  justify-content: center;
  background: #f8f8f8;
}
.sb-groove {
  background: #e5e5e5;
  flex: none;
}
.sb-groove.top {
  height: 77px;
  border-bottom: 1px solid #c9c9c9;
}
.sb-groove.bottom {
  height: 72px;
  border-top: 1px solid #d8d8d8;
}
.sb-handle {
  flex: 1;
  background: linear-gradient(90deg, #f8f8f8, #fff);
}

.panel {
  position: relative;
  flex: 1;
  min-width: 0;
  border-top: 1px solid #d8d8d8;
  margin-top: -1px;
  font-size: 11.500px;
}
.panel-head {
  height: 24px;
  box-sizing: border-box;
  display: flex;
  align-items: center;
  justify-content: space-between;
  padding: 0 1px 2px 10px;
}
.dock-btns {
  display: flex;
  gap: 4px;
}
.dock-btns svg {
  width: 11px;
  height: 11px;
}
.panel-body {
  padding: 12px 8px 0 16px;
}
.group-title {
  line-height: 16px;
  height: 18px;
}
.group {
  box-sizing: border-box;
  height: 145px;
  padding: 12px 0 0 10px;
  background: #ebebeb;
  border: 1px solid #dcdcdc;
  border-radius: 2px;
}
.form-row {
  display: flex;
  align-items: center;
  height: 22px;
  margin-bottom: 10px;
}
.form-row label {
  width: 66px;
  flex: none;
}
.combo {
  width: 249px;
  height: 22px;
  flex: none;
  box-sizing: border-box;
  display: flex;
  align-items: center;
  justify-content: space-between;
  padding: 0 8px 0 5px;
  border: 1px solid #b0b0b0;
  border-radius: 3px;
  background: linear-gradient(#fdfdfd, #efefef);
}
.dd {
  width: 23px;
  height: 16px;
  flex: none;
  margin-left: 10px;
}
.spin-dd {
  margin-left: 9px;
}
.size-block {
  display: flex;
  align-items: flex-start;
  margin-top: 11px;
}
.size-block .form-row {
  height: 20px;
  margin-bottom: 12px;
}
.spin {
  width: 161px;
  height: 20px;
  flex: none;
  box-sizing: border-box;
  display: flex;
  border: 1px solid #b0b0b0;
  border-radius: 3px;
  background: #fff;
}
.spin-val {
  flex: 1;
  padding-left: 4px;
  line-height: 18px;
}
.spin-btns {
  width: 14px;
  border-left: 1px solid #c4c4c4;
  display: flex;
  flex-direction: column;
  align-items: center;
  justify-content: center;
  gap: 3px;
  background: #f3f3f3;
}
.lock {
  width: 13px;
  height: 48px;
  margin: 3px 0 0 17px;
  display: flex;
  flex-direction: column;
  align-items: center;
  justify-content: space-between;
}
.bracket {
  width: 7px;
  height: 11px;
  box-sizing: border-box;
  border-right: 1px solid #c6c6c6;
  margin-right: 2px;
  align-self: flex-end;
}
.b-top {
  border-top: 1px solid #c6c6c6;
}
.b-bottom {
  border-bottom: 1px solid #c6c6c6;
}
.padlock {
  width: 12px;
  height: 16px;
}
.unit {
  width: 51px;
  height: 22px;
  margin: 15px 0 0 12px;
  box-sizing: border-box;
  display: flex;
  align-items: center;
  justify-content: space-between;
  padding: 0 7px 0 5px;
  color: #8a8a8a;
  border: 1px solid #cfcfcf;
  border-radius: 3px;
  background: #f0f0f0;
}
.unit .tri {
  border-top-color: #a8a8a8;
}
.exclude {
  display: flex;
  align-items: center;
  height: 14px;
  margin-top: 11px;
}
.check {
  width: 13px;
  height: 13px;
  box-sizing: border-box;
  border: 1px solid #a8a8a8;
  border-radius: 2px;
  background: #fff;
  margin-right: 6px;
}
.exclude .dd {
  margin-left: 15px;
}
.background {
  display: flex;
  align-items: center;
  margin-top: 12px;
  margin-left: -1px;
  height: 26px;
}
.background label {
  width: 70px;
  flex: none;
}
.color-btn {
  width: 294px;
  height: 26px;
  flex: none;
  box-sizing: border-box;
  border: 1px solid #adadad;
  border-radius: 3px;
  background: #f4f4f4;
  padding: 4px;
}
.color-btn span {
  display: block;
  height: 100%;
  background: #fff;
}
.color-drop {
  width: 12px;
  height: 26px;
  box-sizing: border-box;
  margin-left: 1px;
  border: 1px solid #adadad;
  border-radius: 2px;
  background: #f4f4f4;
  display: flex;
  align-items: center;
  justify-content: center;
}
.splitter {
  position: absolute;
  left: 3px;
  top: 440px;
  width: 2px;
  height: 14px;
  background-image: radial-gradient(circle, #bdbdbd 0.7px, transparent 0.8px);
  background-size: 2px 3px;
}

.statusbar {
  height: 24px;
  flex: none;
  position: relative;
  box-sizing: border-box;
  display: flex;
  align-items: center;
}
.st {
  width: 106px;
  flex: none;
  padding-top: 5px;
}
.st-x {
  margin-left: 1378px;
}
.zoom-combo {
  width: 116px;
  height: 20px;
  margin-top: 4px;
  flex: none;
  box-sizing: border-box;
  display: flex;
  border: 1px solid #b0b0b0;
  border-bottom: 0;
  border-radius: 3px 3px 0 0;
  background: #fff;
  padding-left: 3px;
  line-height: 19px;
  justify-content: space-between;
}
.zoom-combo .drop {
  width: 19px;
  border-left: 1px solid #c4c4c4;
  background: #f2f2f2;
  display: flex;
  align-items: center;
  justify-content: center;
}
.slider {
  position: relative;
  width: 97px;
  height: 5px;
  margin: 5px 0 0 8px;
  flex: none;
  border-radius: 3px;
  background: #e6e6e6;
  border: 1px solid #c4c4c4;
  box-sizing: border-box;
}
.slider .fill {
  position: absolute;
  left: 0;
  top: 0;
  bottom: 0;
  width: 11px;
  background: #1a7fd8;
  border-radius: 2px;
}
.slider .knob {
  position: absolute;
  left: 10px;
  top: -6px;
  width: 13px;
  height: 15px;
  box-sizing: border-box;
  background: #fafafa;
  border: 1px solid #b4b4b4;
  border-radius: 3px;
}

.popup {
  position: absolute;
  left: 174px;
  top: 42px;
  width: 208px;
  box-sizing: border-box;
  border: 1px solid #a0a0a0;
  background: #fff;
  box-shadow: 3px 3px 3px rgba(0, 0, 0, 0.3);
}
.popup-item {
  position: relative;
  height: 23px;
  display: flex;
  align-items: center;
  box-sizing: border-box;
  padding-left: 7px;
  white-space: nowrap;
}
.popup-item.hot {
  background: #0078d7;
  color: #fff;
  outline: 1px solid #3a9cf0;
  outline-offset: -1px;
}
.popup-icon {
  width: 16px;
  height: 16px;
  margin-right: 4px;
  flex: none;
}
.sub-arrow {
  position: absolute;
  right: 5px;
  top: 8px;
  width: 0;
  height: 0;
  border-top: 3.500px solid transparent;
  border-bottom: 3.500px solid transparent;
  border-left: 4px solid #666;
}
.cursor {
  position: absolute;
  left: 286px;
  top: 392px;
  width: 12px;
  height: 20px;
}
</style>

<style>
html,
body {
  margin: 0;
  overflow: hidden;
}
</style>
